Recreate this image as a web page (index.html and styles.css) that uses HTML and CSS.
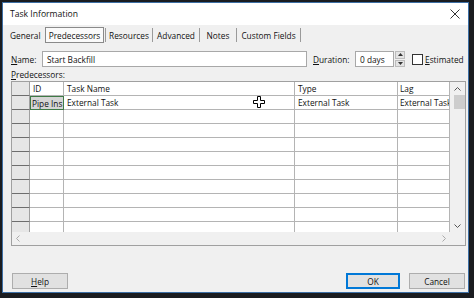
FILE: index.html
```html
<!DOCTYPE html>
<html lang="en">
<head>
    <meta charset="UTF-8">
    <title>Task Information</title>
    <link rel="stylesheet" href="styles.css">
</head>
<body>
    <div class="dialog">
        <div class="titlebar">
            <span>Task Information</span>
            <svg class="close" width="10" height="10" viewBox="0 0 10 10"><path d="M0.5 0.5 L9.5 9.5 M9.5 0.5 L0.5 9.5" stroke="#333" stroke-width="1" fill="none"/></svg>
        </div>
        <div class="tabs">
            <div class="tab tab-general">General</div>
            <div class="tab tab-active">Predecessors</div>
            <div class="tab tab-res">Resources</div>
            <div class="tab tab-adv">Advanced</div>
            <div class="tab tab-notes">Notes</div>
            <div class="tab tab-custom">Custom Fields</div>
        </div>
        <div class="name-row">
            <label class="lbl-name"><u>N</u>ame:</label>
            <div class="input input-name">Start Backfill</div>
            <label class="lbl-dur"><u>D</u>uration:</label>
            <div class="input input-dur">0 days</div>
            <div class="spinner">
                <div class="spin"><svg width="5" height="3" viewBox="0 0 5 3"><path d="M2.5 0 L5 3 L0 3 Z" fill="#333"/></svg></div>
                <div class="spin"><svg width="5" height="3" viewBox="0 0 5 3"><path d="M0 0 L5 0 L2.5 3 Z" fill="#333"/></svg></div>
            </div>
            <div class="checkbox"></div>
            <label class="lbl-est"><u>E</u>stimated</label>
        </div>
        <div class="pred-label"><u>P</u>redecessors:</div>
        <div class="table">
            <div class="table-main">
                <div class="grid">
                    <div class="rh"></div>
                    <div class="hd">ID</div>
                    <div class="hd">Task Name</div>
                    <div class="hd">Type</div>
                    <div class="hd">Lag</div>

                    <div class="rh"></div>
                    <div class="c sel">Pipe Ins</div>
                    <div class="c">External Task</div>
                    <div class="c">External Task</div>
                    <div class="c">External Task</div>

                    <div class="rh"></div><div class="c"></div><div class="c"></div><div class="c"></div><div class="c"></div>
                    <div class="rh"></div><div class="c"></div><div class="c"></div><div class="c"></div><div class="c"></div>
                    <div class="rh"></div><div class="c"></div><div class="c"></div><div class="c"></div><div class="c"></div>
                    <div class="rh"></div><div class="c"></div><div class="c"></div><div class="c"></div><div class="c"></div>
                    <div class="rh"></div><div class="c"></div><div class="c"></div><div class="c"></div><div class="c"></div>
                    <div class="rh"></div><div class="c"></div><div class="c"></div><div class="c"></div><div class="c"></div>
                    <div class="rh"></div><div class="c"></div><div class="c"></div><div class="c"></div><div class="c"></div>
                    <div class="rh"></div><div class="c"></div><div class="c"></div><div class="c"></div><div class="c"></div>
                    <div class="rh"></div><div class="c"></div><div class="c"></div><div class="c"></div><div class="c"></div>
                </div>
                <div class="vscroll">
                    <div class="arrow"><svg width="7" height="4" viewBox="0 0 7 4"><path d="M0.5 3.5 L3.5 0.5 L6.5 3.5" stroke="#555" fill="none"/></svg></div>
                    <div class="thumb"></div>
                    <div class="track"></div>
                    <div class="arrow"><svg width="7" height="4" viewBox="0 0 7 4"><path d="M0.5 0.5 L3.5 3.5 L6.5 0.5" stroke="#555" fill="none"/></svg></div>
                </div>
            </div>
            <div class="hscroll">
                <div class="harrow"><svg width="4" height="7" viewBox="0 0 4 7"><path d="M3.5 0.5 L0.5 3.5 L3.5 6.5" stroke="#aaa" fill="none"/></svg></div>
                <div class="harrow"><svg width="4" height="7" viewBox="0 0 4 7"><path d="M0.5 0.5 L3.5 3.5 L0.5 6.5" stroke="#aaa" fill="none"/></svg></div>
            </div>
            <svg class="cursor" width="12" height="12" viewBox="0 0 12 12"><path d="M4.5 0.5 H7.5 V4.5 H11.5 V7.5 H7.5 V11.5 H4.5 V7.5 H0.5 V4.5 H4.5 Z" fill="#fff" stroke="#000" stroke-width="1"/></svg>
        </div>
        <div class="footer">
            <button class="btn"><u>H</u>elp</button>
            <div class="spacer"></div>
            <button class="btn btn-ok">OK</button>
            <button class="btn">Cancel</button>
        </div>
    </div>
</body>
</html>
```
FILE: styles.css
```css
body {
    margin: 0;
    background-color: #1a1c20;
    font-family: "Open Sans", "Noto Sans", sans-serif;
    font-size: 8.3px;
    color: #111;
}
.dialog {
    box-sizing: border-box;
    margin: 2px 0 0 2px;
    width: 467px;
    height: 291px;
    border: 1px solid #3d6fa5;
    background-color: #f0f0f0;
    display: flex;
    flex-direction: column;
}
.titlebar {
    height: 22px;
    background-color: #fff;
    display: flex;
    align-items: center;
    padding: 0 6px 0 7px;
    font-size: 8.6px;
}
.titlebar span {
    flex: 1;
}
.close {
    margin-right: 2px;
}
.tabs {
    display: flex;
    height: 16px;
    margin-top: 2px;
    align-items: stretch;
}
.tab {
    box-sizing: border-box;
    display: flex;
    align-items: center;
    justify-content: center;
    margin: 1px 0;
    border-left: 1px solid #9a9a9a;
}
.tab-general {
    width: 42px;
    border-left: none;
    justify-content: flex-start;
    padding-left: 7px;
}
.tab-active {
    width: 59px;
    margin: 0 1px 0 0;
    border: 1px solid #8a8a8a;
    background-color: #fafafa;
}
.tab-res { width: 47px; }
.tab-adv { width: 47px; }
.tab-notes { width: 37px; }
.tab-custom {
    width: 65px;
    border-right: 1px solid #9a9a9a;
}
.name-row {
    display: flex;
    align-items: center;
    height: 16px;
    margin-top: 8px;
    padding-left: 8px;
}
.lbl-name {
    width: 31px;
}
.input {
    box-sizing: border-box;
    height: 16px;
    background-color: #fff;
    border: 1px solid #a8a8a8;
    padding-left: 4px;
    display: flex;
    align-items: center;
}
.input-name {
    width: 265px;
}
.lbl-dur {
    width: 42px;
    padding-left: 6px;
}
.input-dur {
    width: 39px;
}
.spinner {
    width: 10px;
    height: 16px;
    margin-left: 1px;
    display: flex;
    flex-direction: column;
    gap: 1px;
}
.spin {
    flex: 1;
    background-color: #e4e4e4;
    border: 1px solid #bcbcbc;
    display: flex;
    align-items: center;
    justify-content: center;
}
.checkbox {
    box-sizing: border-box;
    width: 11px;
    height: 11px;
    margin-left: 7px;
    border: 1px solid #333;
    background-color: #fff;
}
.lbl-est {
    margin-left: 2px;
}
.pred-label {
    height: 14px;
    padding-left: 8px;
    display: flex;
    align-items: center;
}
.table {
    position: relative;
    box-sizing: border-box;
    width: 455px;
    height: 165px;
    margin-left: 8px;
    border: 1px solid #a0a0a0;
    display: flex;
    flex-direction: column;
}
.table-main {
    display: flex;
    height: 150px;
    overflow: hidden;
}
.grid {
    display: grid;
    grid-template-columns: 18px 34px 231px 103px 52px;
    grid-auto-rows: 14px;
    background-color: #fff;
}
.grid > div {
    box-sizing: border-box;
    border-right: 1px solid #b4b4b4;
    border-bottom: 1px solid #b4b4b4;
    padding-left: 3px;
    white-space: nowrap;
    overflow: hidden;
    display: flex;
    align-items: center;
}
.grid > .rh {
    background-color: #e6e6e6;
    border-bottom: 1px solid #6e6e6e;
    border-right: 1px solid #a0a0a0;
}
.grid > .sel {
    background-color: #d6d6d6;
    border: 1px solid #3e7a46;
    padding-left: 1px;
}
.grid > div:nth-child(5n) {
    padding-left: 2px;
}
.vscroll {
    width: 15px;
    background-color: #f0f0f0;
    display: flex;
    flex-direction: column;
}
.arrow {
    height: 13px;
    display: flex;
    align-items: center;
    justify-content: center;
}
.thumb {
    height: 14px;
    margin-left: 4px;
    background-color: #cdcdcd;
}
.track {
    flex: 1;
}
.hscroll {
    height: 13px;
    width: 438px;
    display: flex;
    justify-content: space-between;
    align-items: center;
    padding: 0 4px;
    box-sizing: border-box;
}
.harrow {
    display: flex;
}
.cursor {
    position: absolute;
    left: 241px;
    top: 14px;
}
.footer {
    display: flex;
    margin-top: 27px;
    padding: 0 3px 0 9px;
    gap: 9px;
}
.spacer {
    flex: 1;
}
.btn {
    box-sizing: border-box;
    width: 56px;
    height: 16px;
    padding: 0;
    font-family: inherit;
    font-size: 8.3px;
    color: #111;
    background-color: #e1e1e1;
    border: 1px solid #adadad;
}
.btn-ok {
    border: 1px solid #0078d7;
    box-shadow: inset 0 0 0 1px #0078d7;
    width: 54px;
}
```
